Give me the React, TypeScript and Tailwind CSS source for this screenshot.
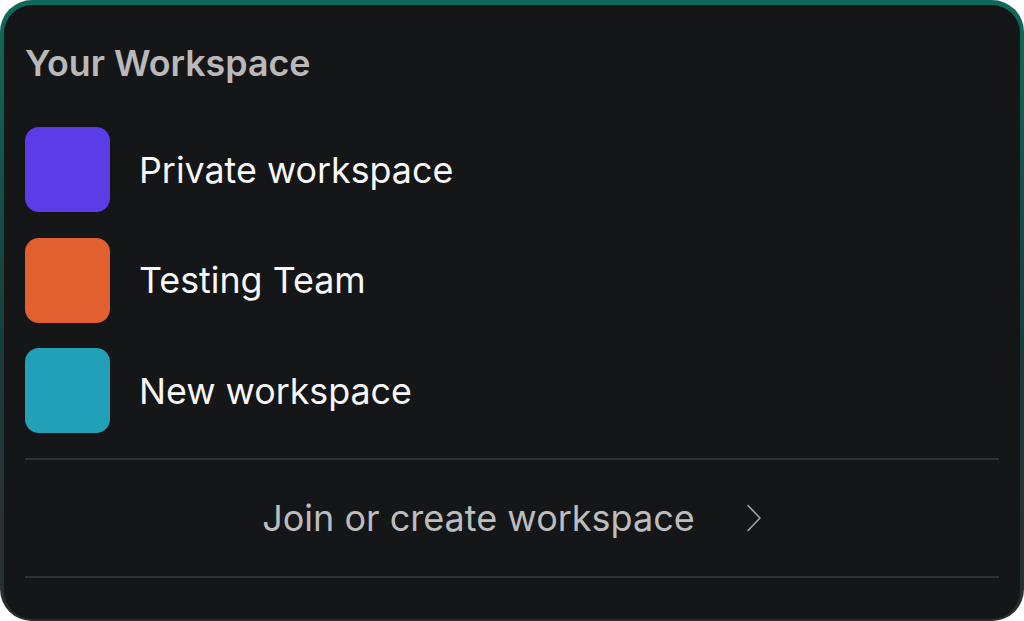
export default function App() {
  const items = [
    { name: 'Private workspace', color: 'bg-[#5a3de6]' },
    { name: 'Testing Team', color: 'bg-[#e2602f]' },
    { name: 'New workspace', color: 'bg-[#22a0b8]' },
  ];

  return (
    <div className="h-[621px] w-[1024px] bg-white font-['Inter',sans-serif]">
      <div className="h-full w-full rounded-[32px] bg-gradient-to-b from-[#0e6a5b] via-[#17403c] to-[#2a2c2e] px-[4px] pb-[2px] pt-[5px]">
        <div className="flex h-full w-full flex-col rounded-[28px] bg-[#151618] px-[21px] pt-[38px]">
          <h1 className="h-[40px] text-[35.8px] font-semibold leading-[40px] text-[#b9b9b9]">Your Workspace</h1>

          <div className="mt-[44px] flex flex-col gap-[25.5px]">
            {items.map((item) => (
              <div key={item.name} className="flex h-[85px] items-center gap-[29px]">
                <div className={`h-[85px] w-[85px] shrink-0 rounded-[14px] ${item.color}`} />
                <span className="text-[35.8px] leading-[40px] text-[#f7f7f7]">{item.name}</span>
              </div>
            ))}
          </div>

          <div className="mt-[25px] h-[2px] w-full bg-[#2f3032]" />
          <button className="flex h-[116px] w-full items-center justify-center gap-[51px] text-[#bdbdbd]">
            <span className="text-[36px] leading-[40px]">Join or create workspace</span>
            <svg width="16" height="28" viewBox="0 0 16 28" fill="none">
              <path d="M2 1.5 L14 14 L2 26.5" stroke="#a3a3a3" strokeWidth="1.6" strokeLinecap="round" strokeLinejoin="round" />
            </svg>
          </button>
          <div className="h-[2px] w-full bg-[#2f3032]" />
        </div>
      </div>
    </div>
  );
}
